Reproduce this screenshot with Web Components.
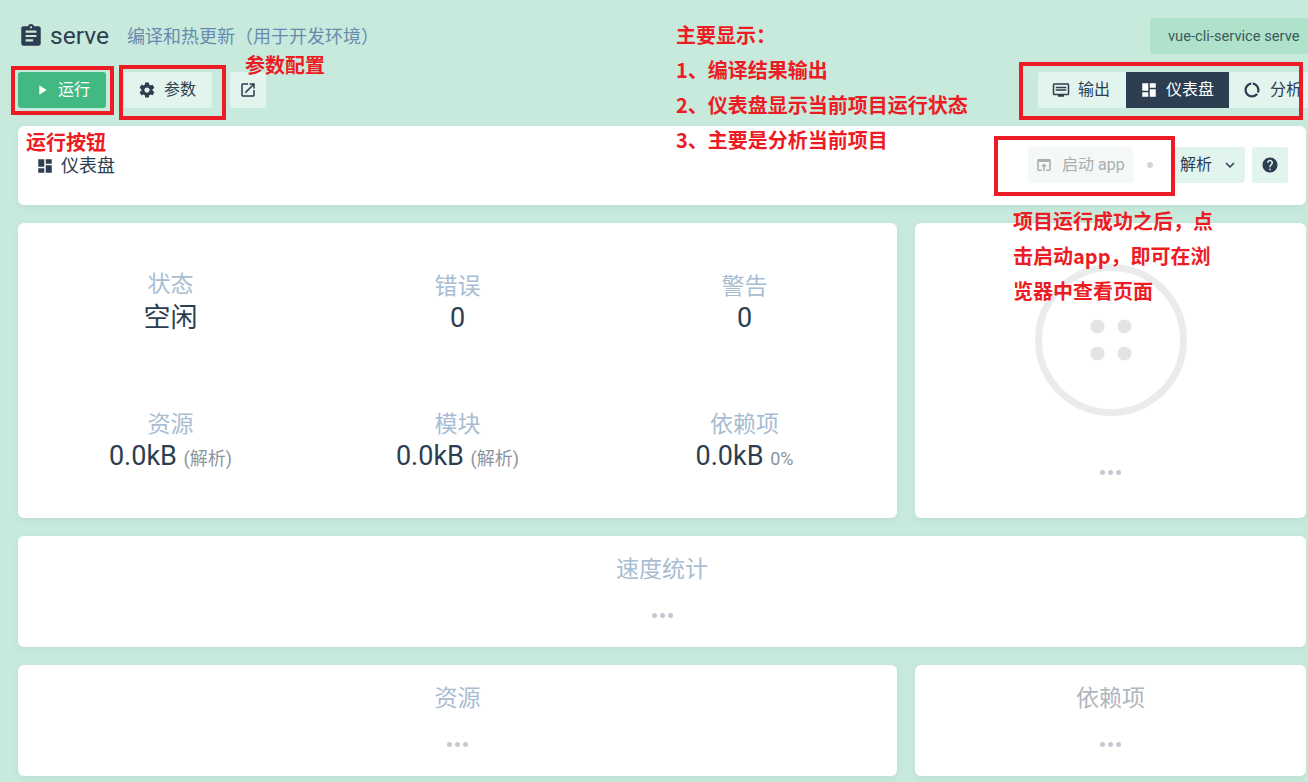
<!DOCTYPE html>
<html lang="zh"><head><meta charset="utf-8"><title>serve</title>
<style>
html,body{margin:0;height:782px;overflow:hidden;background:#c7eadd}
body{font-family:Roboto,"Noto Sans CJK SC",sans-serif;color:#2c3e50;width:1308px;position:relative}
</style></head><body>
<task-page></task-page>
<script>
const I={
clip:'<path d="M19 3h-4.18C14.4 1.84 13.3 1 12 1s-2.4.84-2.82 2H5c-1.1 0-2 .9-2 2v14c0 1.1.9 2 2 2h14c1.1 0 2-.9 2-2V5c0-1.1-.9-2-2-2zm-7 0c.55 0 1 .45 1 1s-.45 1-1 1-1-.45-1-1 .45-1 1-1zm2 14H7v-2h7v2zm3-4H7v-2h10v2zm0-4H7V7h10v2z"/>',
play:'<path d="M8 5v14l11-7z"/>',
gear:'<path d="M19.43 12.98c.04-.32.07-.64.07-.98s-.03-.66-.07-.98l2.11-1.65c.19-.15.24-.42.12-.64l-2-3.46c-.12-.22-.39-.3-.61-.22l-2.49 1c-.52-.4-1.08-.73-1.69-.98l-.38-2.65C14.46 2.18 14.25 2 14 2h-4c-.25 0-.46.18-.49.42l-.38 2.65c-.61.25-1.17.59-1.69.98l-2.49-1c-.23-.09-.49 0-.61.22l-2 3.46c-.13.22-.07.49.12.64l2.11 1.65c-.04.32-.07.65-.07.98s.03.66.07.98l-2.11 1.65c-.19.15-.24.42-.12.64l2 3.46c.12.22.39.3.61.22l2.49-1c.52.4 1.08.73 1.69.98l.38 2.65c.03.24.24.42.49.42h4c.25 0 .46-.18.49-.42l.38-2.65c.61-.25 1.17-.59 1.69-.98l2.49 1c.23.09.49 0 .61-.22l2-3.46c.12-.22.07-.49-.12-.64l-2.11-1.65zM12 15.5c-1.93 0-3.5-1.57-3.5-3.5s1.57-3.5 3.5-3.5 3.5 1.57 3.5 3.5-1.57 3.5-3.5 3.5z"/>',
open:'<path d="M19 19H5V5h7V3H5c-1.11 0-2 .9-2 2v14c0 1.1.89 2 2 2h14c1.1 0 2-.9 2-2v-7h-2v7zM14 3v2h3.59l-9.83 9.83 1.41 1.41L19 6.41V10h2V3h-7z"/>',
out:'<path d="M21 3H3c-1.1 0-2 .9-2 2v12c0 1.1.9 2 2 2h5v2h8v-2h5c1.1 0 2-.9 2-2V5c0-1.1-.9-2-2-2zm0 14H3V5h18v12zM5 7.5h14v2H5zm0 3.5h14v2H5z"/>',
dash:'<path d="M3 13h8V3H3v10zm0 8h8v-6H3v6zm10 0h8V11h-8v10zm0-18v6h8V3h-8z"/>',
donut:'<path d="M13 2.05v3.03c3.39.49 6 3.39 6 6.92 0 .9-.18 1.75-.48 2.54l2.6 1.53c.56-1.24.88-2.62.88-4.07 0-5.18-3.95-9.45-9-9.95zM12 19c-3.87 0-7-3.13-7-7 0-3.53 2.61-6.43 6-6.92V2.05c-5.06.5-9 4.76-9 9.95 0 5.52 4.47 10 9.99 10 3.31 0 6.24-1.61 8.06-4.09l-2.6-1.53C16.17 17.98 14.21 19 12 19z"/>',
launch:'<path d="M19 4H5c-1.11 0-2 .9-2 2v12c0 1.1.89 2 2 2h4v-2H5V8h14v10h-4v2h4c1.1 0 2-.9 2-2V6c0-1.1-.89-2-2-2zm-7 6l-4 4h3v6h2v-6h3l-4-4z"/>',
chev:'<path d="M7.41 8.59L12 13.17l4.59-4.58L18 10l-6 6-6-6z"/>',
help:'<path d="M12 2C6.48 2 2 6.48 2 12s4.48 10 10 10 10-4.48 10-10S17.52 2 12 2zm1 17h-2v-2h2v2zm2.07-7.75l-.9.92C13.45 12.9 13 13.5 13 15h-2v-.5c0-1.1.45-2.1 1.17-2.83l1.24-1.26c.37-.36.59-.86.59-1.41 0-1.1-.9-2-2-2s-2 .9-2 2H8c0-2.21 1.79-4 4-4s4 1.79 4 4c0 .88-.36 1.68-.93 2.25z"/>'
};
const svg=(n,s,c='currentColor')=>`<svg width="${s}" height="${s}" viewBox="0 0 24 24" fill="${c}" style="display:block;flex:none" aria-hidden="true">${I[n]}</svg>`;
function def(name,css,html){customElements.define(name,class extends HTMLElement{
  constructor(){super();this.attachShadow({mode:'open'})}
  connectedCallback(){this.shadowRoot.innerHTML=`<style>${css}</style>`+(typeof html==='function'?html(this):html)}
})}
const CJK='Roboto,"Noto Sans CJK SC",sans-serif';
def('ui-button',`:host{display:inline-flex;flex:none;align-items:center;height:36px;box-sizing:border-box;border-radius:3px;background:#e2f4ee;color:#2c3e50;font:16px/34px ${CJK};white-space:nowrap;padding:0 var(--px,14px) var(--pb,1px);gap:var(--gap,11px)}
svg{margin-top:var(--im,1px)}
:host([primary]){background:#42b983;color:#fff}
:host([dark]){background:#2c3e50;color:#fff;border-radius:0}
:host([flat]){border-radius:0;background:transparent}
:host([ghost]){background:#f4f8f7;color:#a9afaf}`,
 h=>`${h.getAttribute('icon')?svg(h.getAttribute('icon'),+h.getAttribute('size')||18):''}<slot></slot>${h.hasAttribute('chev')?svg('chev',18):''}`);
def('task-header',`:host{display:flex;justify-content:space-between;align-items:center;height:36px}
.l{display:flex;align-items:center}
.t{font-size:24.6px;margin-left:6px;line-height:36px}
.d{font-size:18px;color:#6a8bad;margin:2px 0 0 18px;line-height:36px}
.c{background:#aee2cb;font-size:14.7px;color:#3c5a5a;height:36px;line-height:37px;border-radius:3px 0 0 3px;padding:0 0 0 18px;width:158px;box-sizing:border-box;flex:none;white-space:nowrap}`,
 `<div class="l">${svg('clip',26)}<span class="t">serve</span><span class="d">编译和热更新（用于开发环境）</span></div><div class="c">vue-cli-service serve</div>`);
def('dash-toolbar',`:host{display:flex;align-items:center;justify-content:space-between;height:36px;--pb:0px;--im:0px}
.l{display:flex;gap:18px}
.tabs{display:flex;background:#e2f4ee;border-radius:3px 0 0 3px;width:270px;overflow:hidden;flex:none}`,
 `<div class="l"><ui-button primary icon="play" size="16" style="width:88px;--px:16px;--gap:8px">运行</ui-button><ui-button icon="gear" size="18" style="width:88px;--px:14px;--gap:8px">参数</ui-button><ui-button icon="open" size="18" style="width:36px;--px:9px"></ui-button></div>
 <div class="tabs"><ui-button flat icon="out" size="18" style="width:88px;--px:14px;--gap:8px">输出</ui-button><ui-button dark icon="dash" size="18" style="width:103px;--px:14px;--gap:8px">仪表盘</ui-button><ui-button flat icon="donut" size="18" style="--px:14px;--gap:9px">分析</ui-button></div>`);
def('ui-card',`:host{display:block;background:#fff;border-radius:6px;box-sizing:border-box;box-shadow:0 2px 8px rgba(0,0,0,.05)}`,`<slot></slot>`);
def('dash-head',`:host{display:flex;align-items:flex-start;justify-content:space-between;padding:21px 18px 0 18px;height:79px;box-sizing:border-box}
.n{display:flex;align-items:center;gap:7px;font-size:18px;line-height:36px;height:36px;margin-top:1px}
.r{display:flex;align-items:center}
.dot{width:6px;height:6px;border-radius:50%;background:#d4d7d9;margin:0 20px 0 14px}`,
 `<div class="n">${svg('dash',18)}<span>仪表盘</span></div><div class="r"><ui-button ghost icon="launch" size="18" style="width:105px;--px:7px;--gap:9px">启动 app</ui-button><span class="dot"></span><ui-button chev style="width:72px;--px:7px;--gap:9px;border-radius:0 3px 3px 0">解析</ui-button><ui-button icon="help" size="18" style="width:36px;--px:9px;margin-left:7px"></ui-button></div>`);
def('stat-item',`:host{display:flex;flex-direction:column;align-items:center;text-align:center}
.k{font-size:23px;line-height:27px;padding-top:1px;color:#a8bdd2}
:host([raised]) .k{margin-top:-2px;margin-bottom:2px}
.v{font-size:27px;line-height:36px;color:#2c3e50;white-space:nowrap}
.s{font-size:18px;color:#8c949c}`,
 h=>`<div class="k">${h.getAttribute('k')}</div><div class="v">${h.getAttribute('v')}${h.getAttribute('s')?` <span class="s">${h.getAttribute('s')}</span>`:''}</div>`);
def('stat-grid',`:host{display:grid;grid-template-columns:repeat(3,287px);grid-template-rows:138px 138px;padding:49px 8px 0;box-sizing:border-box;height:295px;justify-content:center}`,`<slot></slot>`);
def('empty-card',`:host{display:flex;flex-direction:column;align-items:center;text-align:center;height:100%;box-sizing:border-box;padding-top:var(--top,20px)}
.k{font-size:23px;line-height:28px;color:#a8bdd2}
.dots{display:flex;gap:3px;margin-top:var(--dots,29px)}i{width:5px;height:5px;border-radius:50%;background:#c4cad1;display:block}`,
 h=>`${h.getAttribute('k')?`<div class="k" style="${h.hasAttribute('gray')?'color:#b0b6bd':''}">${h.getAttribute('k')}</div>`:''}<slot></slot><div class="dots"><i></i><i></i><i></i></div>`);
def('note-text',`:host{position:absolute;color:#ed1c24;font:700 20px/35px "Noto Sans CJK SC",sans-serif;white-space:pre;z-index:5}`,`<slot></slot>`);
def('note-box',`:host{position:absolute;box-sizing:border-box;border:4px solid #ed1c24;z-index:5}`,``);
def('task-page',`:host{display:flex;flex-direction:column;padding:18px 2px 0 18px;box-sizing:border-box;width:1308px;height:782px;overflow:hidden}
.g{display:flex;flex-direction:column;gap:18px}
.top{display:flex;flex-direction:column;gap:18px;margin-right:-2px;margin-bottom:18px}
.r{display:grid;grid-template-columns:879px 391px;gap:18px}
svg.b{display:block;margin-top:41px}`,
 `<div class="top"><task-header></task-header><dash-toolbar></dash-toolbar></div>
 <div class="g">
  <ui-card style="height:79px"><dash-head></dash-head></ui-card>
  <div class="r" style="height:295px">
   <ui-card><stat-grid>
    <stat-item raised k="状态" v="空闲"></stat-item><stat-item k="错误" v="0"></stat-item><stat-item k="警告" v="0"></stat-item>
    <stat-item k="资源" v="0.0kB" s="(解析)"></stat-item><stat-item k="模块" v="0.0kB" s="(解析)"></stat-item><stat-item k="依赖项" v="0.0kB" s="0%"></stat-item>
   </stat-grid></ui-card>
   <ui-card><empty-card style="--top:0;--dots:54px"><svg class="b" width="152" height="152" viewBox="0 0 152 152"><circle cx="76" cy="76" r="72.5" fill="none" stroke="#eaebed" stroke-width="7"/><circle cx="62.5" cy="62.5" r="7" fill="#e4e4e4"/><circle cx="89.5" cy="62.5" r="7" fill="#e4e4e4"/><circle cx="62.5" cy="89.5" r="7" fill="#e4e4e4"/><circle cx="89.5" cy="89.5" r="7" fill="#e4e4e4"/></svg></empty-card></ui-card>
  </div>
  <ui-card style="height:111px"><empty-card k="速度统计"></empty-card></ui-card>
  <div class="r" style="height:111px">
   <ui-card><empty-card k="资源"></empty-card></ui-card>
   <ui-card><empty-card k="依赖项" gray></empty-card></ui-card>
  </div>
 </div>
 <note-box style="left:11px;top:66px;width:103px;height:49px"></note-box>
 <note-box style="left:119px;top:65px;width:107px;height:55px"></note-box>
 <note-box style="left:1019px;top:62px;width:284px;height:58px"></note-box>
 <note-box style="left:994px;top:136px;width:181px;height:60px"></note-box>
 <note-text style="left:245px;top:47px">参数配置</note-text>
 <note-text style="left:26px;top:124px">运行按钮</note-text>
 <note-text style="left:676px;top:17px">主要显示：
1、编译结果输出
2、仪表盘显示当前项目运行状态
3、主要是分析当前项目</note-text>
 <note-text style="left:1013px;top:203px">项目运行成功之后，点
击启动app，即可在浏
览器中查看页面</note-text>`);
</script>
</body></html>
